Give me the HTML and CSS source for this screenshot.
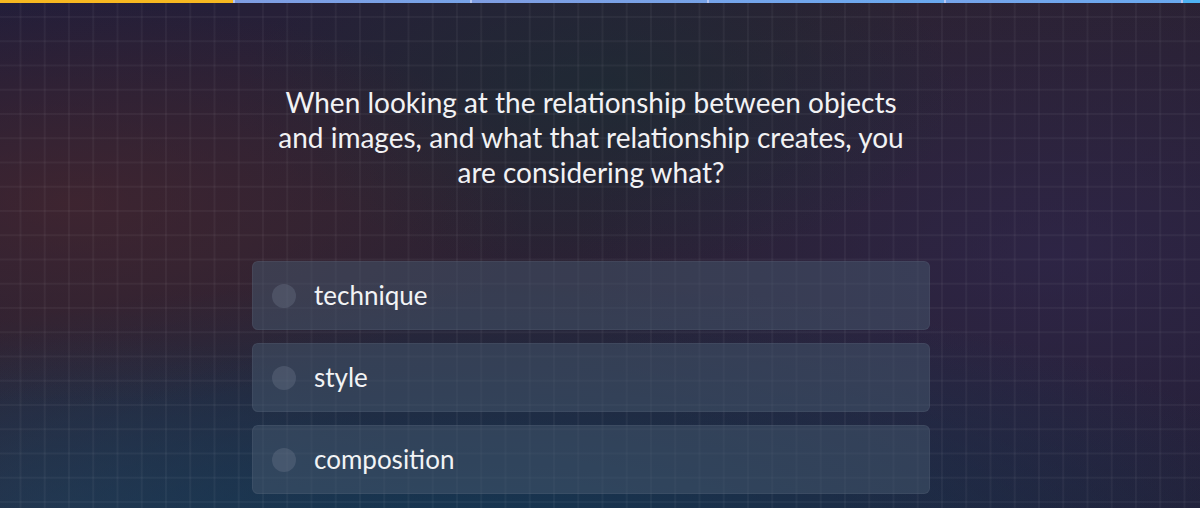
FILE: index.html
```html
<!DOCTYPE html>
<html lang="en">
  <head>
    <meta charset="UTF-8" />
    <meta name="viewport" content="width=device-width, initial-scale=1.0" />
    <title>Quiz</title>
    <link rel="stylesheet" href="styles.css">
  </head>
  <body>
    <div class="progress">
      <div class="progress-fill"></div>
      <div class="progress-seg"></div>
      <div class="progress-seg"></div>
      <div class="progress-seg"></div>
      <div class="progress-seg"></div>
      <div class="progress-seg last"></div>
    </div>
    <main class="quiz">
      <div class="quiz-inner">
        <h1 class="question">
          When looking at the relationship between objects and images, and what that relationship creates, you are considering what?
        </h1>
        <div class="options">
          <button type="button" class="option">
            <span class="radio"></span>
            <span class="label">technique</span>
          </button>
          <button type="button" class="option">
            <span class="radio"></span>
            <span class="label">style</span>
          </button>
          <button type="button" class="option">
            <span class="radio"></span>
            <span class="label">composition</span>
          </button>
        </div>
      </div>
    </main>
  </body>
</html>
```
FILE: styles.css
```css
html,
body {
  height: 100%;
}
body {
  margin: 0;
  font-family: "Lato", "Open Sans", sans-serif;
  color: #f2f2f4;
  background-color: #241f34;
  background-image:
    linear-gradient(rgba(255, 255, 255, 0.04) 2px, transparent 2px),
    linear-gradient(90deg, rgba(255, 255, 255, 0.04) 2px, transparent 2px),
    radial-gradient(ellipse 38% 40% at 6% 40%, rgba(70, 38, 46, 0.7), transparent),
    radial-gradient(ellipse 30% 35% at 50% 18%, rgba(22, 48, 54, 0.55), transparent),
    radial-gradient(ellipse 75% 55% at 38% 110%, rgba(16, 62, 92, 0.85), transparent),
    radial-gradient(ellipse 30% 35% at 5% 100%, rgba(50, 62, 86, 0.6), transparent),
    radial-gradient(ellipse 40% 55% at 88% 50%, rgba(50, 40, 82, 0.55), transparent),
    linear-gradient(160deg, #231e3a 0%, #2c2233 35%, #241f37 100%);
  background-size: 24.25px 24.25px, 24.25px 24.25px, auto, auto, auto, auto, auto, auto;
  background-position: 19.5px 16px, 19.5px 16px, 0 0, 0 0, 0 0, 0 0, 0 0, 0 0;
  display: flex;
  flex-direction: column;
  overflow: hidden;
}
.progress {
  display: flex;
  gap: 2px;
  height: 3px;
  background: #b6c6f2;
}
.progress-fill {
  width: 233px;
  background: #f7b821;
}
.progress-seg {
  width: 235px;
  background: linear-gradient(90deg, #7f9de2, #77a3e8);
}
.progress-seg:nth-child(4),
.progress-seg:nth-child(5) {
  background: linear-gradient(90deg, #76a4ea, #6aa9ef);
}
.progress-seg.last {
  flex: 1;
  background: #4fb3f4;
}
.quiz {
  flex: 1;
  padding: 82px 18px 0 0;
  display: flex;
  justify-content: center;
}
.quiz-inner {
  width: 678px;
}
.question {
  margin: 0 auto;
  max-width: 645px;
  font-size: 28px;
  font-weight: 400;
  line-height: 35px;
  text-align: center;
}
.options {
  margin-top: 71px;
  display: flex;
  flex-direction: column;
  gap: 13px;
}
.option {
  display: flex;
  align-items: center;
  gap: 18px;
  height: 69px;
  padding: 0 19px;
  border: 1px solid rgba(255, 255, 255, 0.05);
  border-radius: 6px;
  background: rgba(70, 88, 110, 0.5);
  color: #f2f3f5;
  font-family: inherit;
  font-size: 26px;
  text-align: left;
  cursor: pointer;
}
.option:hover {
  background: rgba(82, 100, 122, 0.55);
}
.radio {
  width: 24px;
  height: 24px;
  border-radius: 50%;
  background: rgba(120, 130, 150, 0.3);
  flex-shrink: 0;
}
.label {
  padding-bottom: 2px;
}
```
